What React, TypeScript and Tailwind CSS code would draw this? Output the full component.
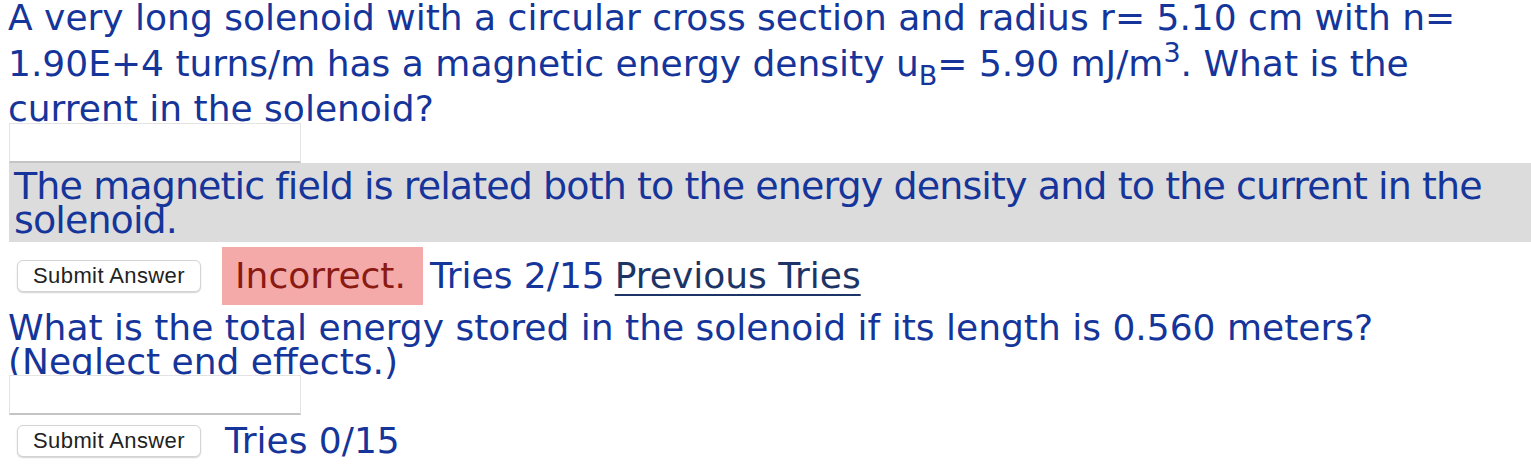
import React from "react";

const btn =
  "h-[32px] w-[184px] shrink-0 rounded-[6px] border border-[#d4d4d4] bg-white shadow-[0_1px_1.5px_rgba(0,0,0,0.18)] text-[22px] tracking-[0.4px] leading-none text-[#222] font-['Liberation_Sans',Arial,sans-serif]";

export default function App() {
  return (
    <div className="w-[1531px] h-[469px] bg-white overflow-hidden text-[#15359a] font-['DejaVu_Sans',Verdana,sans-serif] text-[36px]">
      <div className="pl-[8px] leading-[45.5px] -mt-[5px] h-[128px]">
        A very long solenoid with a circular cross section and radius r= 5.10 cm with n= 1.90E+4 turns/m has a magnetic energy density u
        <span className="relative top-[9px] text-[27px] leading-none">B</span>= 5.90 mJ/m
        <span className="relative -top-[14px] text-[27px] leading-none">3</span>. What is the current in the solenoid?
      </div>
      <div className="pl-[9px] relative">
        <div className="w-[292px] h-[40px] border border-[#e3e3e3] border-b-2 border-b-[#c4c4c4] bg-white" />
      </div>
      <div className="ml-[9px] bg-[#dcdcdc] h-[79px] pl-[5px] pt-[6px] text-[38px] leading-[34px] tracking-[-0.9px]">
        The magnetic field is related both to the energy density and to the current in the solenoid.
      </div>
      <div className="flex items-center h-[58px] mt-[5px] pl-[17px]">
        <button className={btn}>Submit Answer</button>
        <span className="ml-[21px] h-[58px] w-[201px] shrink-0 bg-[#f4aaa9] text-[#8a1a12] pl-[13px] flex items-center">
          Incorrect.
        </span>
        <span className="ml-[7px]">Tries 2/15</span>
        <span className="ml-[10px] underline text-[#1c3566] decoration-2 underline-offset-[6px]">Previous Tries</span>
      </div>
      <div className="pl-[8px] pr-[20px] leading-[34px] mt-[5.5px] h-[68px]">
        What is the total energy stored in the solenoid if its length is 0.560 meters? (Neglect end effects.)
      </div>
      <div className="pl-[9px] relative -mt-[3.5px]">
        <div className="w-[292px] h-[40px] border border-[#e3e3e3] border-b-2 border-b-[#c4c4c4] bg-white" />
      </div>
      <div className="flex items-center h-[52px] pl-[17px]">
        <button className={btn}>Submit Answer</button>
        <span className="ml-[24px]">Tries 0/15</span>
      </div>
    </div>
  );
}
